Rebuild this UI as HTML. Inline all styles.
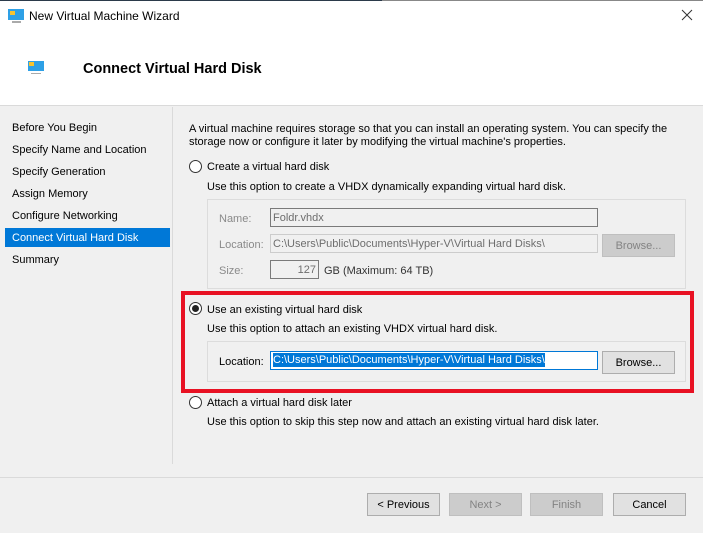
<!DOCTYPE html><html><head><style>
body{margin:0;width:703px;height:533px;background:#f0f0f0;font-family:"Liberation Sans",sans-serif;font-size:11px;color:#000;position:relative;overflow:hidden}
.a{position:absolute;white-space:nowrap}
.g{color:#8a8a8a}
.box{position:absolute;border:1px solid #dcdcdc}
.tb{position:absolute;height:19px;box-sizing:border-box;border:1px solid #7a7a7a;background:#f0f0f0;padding:3px 2px;color:#6d6d6d}
.btn{position:absolute;height:23px;box-sizing:border-box;border:1px solid #adadad;background:#e1e1e1;text-align:center;line-height:22px}
.dis{border-color:#bfbfbf;background:#cccccc;color:#838383}
.rad{position:absolute;width:11px;height:11px;border:1px solid #333;border-radius:50%;background:#fff}
</style></head><body>
<div class="a" style="left:0;top:0;width:703px;height:105px;background:#fff;border-bottom:1px solid #dadada"></div>
<div class="a" style="left:0;top:0;width:382px;height:1px;background:#2b3a4a"></div>
<div class="a" style="left:382px;top:0;width:321px;height:1px;background:#888"></div>
<svg class="a" style="left:8px;top:8px" width="17" height="16"><rect x="0" y="1" width="16" height="11" fill="#2ea0e6"/><rect x="2" y="3" width="5" height="4" fill="#f7c330"/><rect x="4" y="13" width="9" height="2" fill="#aaa"/></svg>
<div class="a" style="left:29px;top:9px;font-size:12px">New Virtual Machine Wizard</div>
<svg class="a" style="left:681px;top:9px" width="12" height="12"><path d="M1 1L11 11M11 1L1 11" stroke="#333" stroke-width="1"/></svg>
<svg class="a" style="left:28px;top:61px" width="17" height="14"><rect x="0" y="0" width="16" height="10" fill="#2ea0e6"/><rect x="1" y="1" width="5" height="4" fill="#f7c330"/><rect x="3" y="12" width="10" height="1" fill="#aaa"/></svg>
<div class="a" style="left:83px;top:61px;font-size:14.5px;font-weight:bold">Connect Virtual Hard Disk</div>
<div class="a" style="left:172px;top:107px;width:1px;height:357px;background:#dadada"></div>
<div class="a" style="left:12px;top:122px">Before You Begin</div>
<div class="a" style="left:12px;top:144px">Specify Name and Location</div>
<div class="a" style="left:12px;top:166px">Specify Generation</div>
<div class="a" style="left:12px;top:188px">Assign Memory</div>
<div class="a" style="left:12px;top:210px">Configure Networking</div>
<div class="a" style="left:5px;top:228px;width:165px;height:19px;background:#0078d7"></div>
<div class="a" style="left:12px;top:232px;color:#fff">Connect Virtual Hard Disk</div>
<div class="a" style="left:12px;top:254px">Summary</div>
<div class="a" style="left:189px;top:123px;line-height:13px">A virtual machine requires storage so that you can install an operating system. You can specify the<br>storage now or configure it later by modifying the virtual machine's properties.</div>
<div class="rad" style="left:189px;top:160px"></div>
<div class="a" style="left:207px;top:161px">Create a virtual hard disk</div>
<div class="a" style="left:207px;top:181px">Use this option to create a VHDX dynamically expanding virtual hard disk.</div>
<div class="box" style="left:207px;top:199px;width:477px;height:88px"></div>
<div class="a g" style="left:219px;top:213px">Name:</div>
<div class="tb" style="left:270px;top:208px;width:328px">Foldr.vhdx</div>
<div class="a g" style="left:219px;top:239px">Location:</div>
<div class="tb" style="left:270px;top:234px;width:328px;border-color:#ccc">C:\Users\Public\Documents\Hyper-V\Virtual Hard Disks\</div>
<div class="btn dis" style="left:602px;top:234px;width:73px">Browse...</div>
<div class="a g" style="left:219px;top:265px">Size:</div>
<div class="tb" style="left:270px;top:260px;width:49px;text-align:right">127</div>
<div class="a" style="left:324px;top:265px;color:#333">GB (Maximum: 64 TB)</div>
<div class="a" style="left:181px;top:291px;width:505px;height:94px;border:4px solid #e81123"></div>
<div class="rad" style="left:189px;top:302px"></div><div class="a" style="left:192px;top:305px;width:7px;height:7px;border-radius:50%;background:#222"></div>
<div class="a" style="left:207px;top:304px">Use an existing virtual hard disk</div>
<div class="a" style="left:207px;top:323px">Use this option to attach an existing VHDX virtual hard disk.</div>
<div class="box" style="left:207px;top:341px;width:477px;height:39px"></div>
<div class="a" style="left:219px;top:356px">Location:</div>
<div class="tb" style="left:270px;top:351px;width:328px;background:#fff;border-color:#0078d7;padding:2px 2px"><span style="background:#0078d7;color:#fff;padding:1px 0">C:\Users\Public\Documents\Hyper-V\Virtual Hard Disks\</span></div>
<div class="btn" style="left:602px;top:351px;width:73px">Browse...</div>
<div class="rad" style="left:189px;top:396px"></div>
<div class="a" style="left:207px;top:397px">Attach a virtual hard disk later</div>
<div class="a" style="left:207px;top:416px">Use this option to skip this step now and attach an existing virtual hard disk later.</div>
<div class="a" style="left:0;top:477px;width:703px;height:1px;background:#dadada"></div>
<div class="btn" style="left:367px;top:493px;width:73px">&lt; Previous</div>
<div class="btn dis" style="left:449px;top:493px;width:73px">Next &gt;</div>
<div class="btn dis" style="left:530px;top:493px;width:73px">Finish</div>
<div class="btn" style="left:613px;top:493px;width:73px">Cancel</div>
</body></html>
